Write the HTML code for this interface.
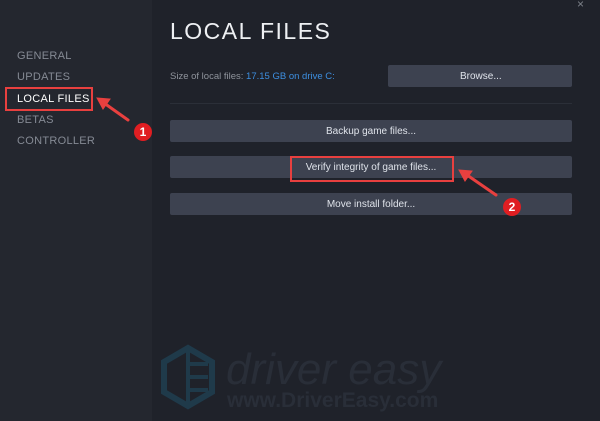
<!DOCTYPE html>
<html><head><style>
body{margin:0;width:600px;height:421px;background:#1f222a;font-family:"Liberation Sans",sans-serif;position:relative;overflow:hidden}
.side{position:absolute;left:0;top:0;width:152px;height:421px;background:#24272f}
.nav{position:absolute;left:17px;font-size:11px;color:#858a94;letter-spacing:.3px}
.btn{position:absolute;background:#3d4250;color:#dfe3ea;font-size:10px;height:22px;border-radius:2px;display:flex;align-items:center;justify-content:center}
.red{position:absolute;border:2px solid #e8403f}
.c{position:absolute;width:18px;height:18px;border-radius:50%;background:#e01e22;color:#fff;font-size:12px;font-weight:bold;text-align:center;line-height:18px}
</style></head><body>
<div class="side"></div>
<div class="nav" style="top:50px">GENERAL</div>
<div class="nav" style="top:71px">UPDATES</div>
<div class="nav" style="top:93px;color:#fff">LOCAL FILES</div>
<div class="nav" style="top:114px">BETAS</div>
<div class="nav" style="top:135px">CONTROLLER</div>
<div class="red" style="left:5px;top:87px;width:84px;height:20px"></div>
<div style="position:absolute;left:170px;top:18px;font-size:23px;color:#eef0f3;letter-spacing:1.5px">LOCAL FILES</div>
<div style="position:absolute;left:170px;top:71px;font-size:9.5px;color:#8f949c">Size of local files: <span style="color:#3d8fe0">17.15 GB on drive C:</span></div>
<div style="position:absolute;left:577px;top:-3px;color:#7d828a;font-size:12px">×</div>
<div class="btn" style="left:388px;top:65px;width:184px;justify-content:flex-start"><span style="margin-left:72px">Browse...</span></div>
<div style="position:absolute;left:170px;top:103px;width:402px;height:1px;background:#2b2f38"></div>
<div class="btn" style="left:170px;top:120px;width:402px">Backup game files...</div>
<div class="btn" style="left:170px;top:156px;width:402px">Verify integrity of game files...</div>
<div class="btn" style="left:170px;top:193px;width:402px">Move install folder...</div>
<div class="red" style="left:290px;top:156px;width:160px;height:22px"></div>
<svg style="position:absolute;left:0;top:0" width="600" height="421">
<g stroke="#e8403f" stroke-width="3" fill="#e8403f" stroke-linecap="round">
<line x1="128" y1="120" x2="104" y2="103"/><polygon points="97,98 110,99 103,109" stroke-width="1"/>
<line x1="496" y1="195" x2="467" y2="175"/><polygon points="459,170 472,171 465,181" stroke-width="1"/>
</g>
<g>
<path d="M164 362 L188 348 L212 362 L212 392 L188 406 L164 392Z" fill="none" stroke="#1f3a4a" stroke-width="6"/>
<path d="M188 350 V404 M188 364 H208 M188 377 H208 M188 390 H208" stroke="#1f3a4a" stroke-width="4"/>
<text x="226" y="384" font-family="Liberation Sans" font-style="italic" font-size="44" fill="#292e38">driver easy</text>
<text x="227" y="407" font-family="Liberation Sans" font-weight="bold" font-size="21" fill="#292e38">www.DriverEasy.com</text>
</g>
</svg>
<div class="c" style="left:134px;top:123px">1</div>
<div class="c" style="left:503px;top:198px">2</div>
</body></html>
